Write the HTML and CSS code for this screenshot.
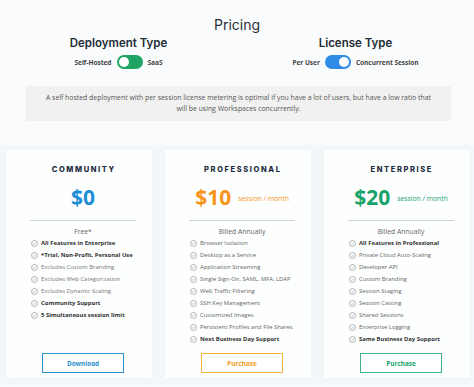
FILE: index.html
```html
<!DOCTYPE html>
<html lang="en">
<head>
    <meta charset="UTF-8">
    <title>Pricing</title>
    <link rel="stylesheet" href="styles.css">
</head>
<body>
    <div class="pricing-page">
        <h1 class="page-title">Pricing</h1>

        <div class="options">
            <div class="option">
                <h2 class="option-title">Deployment Type</h2>
                <div class="switch-row">
                    <span class="switch-label">Self-Hosted</span>
                    <span class="switch switch-green"><span class="knob"></span></span>
                    <span class="switch-label">SaaS</span>
                </div>
            </div>
            <div class="option">
                <h2 class="option-title">License Type</h2>
                <div class="switch-row">
                    <span class="switch-label">Per User</span>
                    <span class="switch switch-blue on"><span class="knob"></span></span>
                    <span class="switch-label">Concurrent Session</span>
                </div>
            </div>
        </div>

        <div class="info-box">
            A self hosted deployment with per session license metering is optimal if you have a lot of users, but have a low ratio that<br>
            will be using Workspaces concurrently.
        </div>

        <div class="plans">
            <div class="plan plan-community">
                <h3 class="plan-name">COMMUNITY</h3>
                <div class="plan-price"><span class="amount">$0</span></div>
                <div class="divider"></div>
                <p class="billing">Free*</p>
                <ul class="features">
                    <li class="strong">All Features in Enterprise</li>
                    <li class="strong">*Trial, Non-Profit, Personal Use</li>
                    <li class="muted">Excludes Custom Branding</li>
                    <li class="muted">Excludes Web Categorization</li>
                    <li class="muted">Excludes Dynamic Scaling</li>
                    <li class="strong">Community Support</li>
                    <li class="strong">5 Simultaneous session limit</li>
                </ul>
                <button class="plan-button">Download</button>
            </div>

            <div class="plan plan-pro">
                <h3 class="plan-name">PROFESSIONAL</h3>
                <div class="plan-price"><span class="amount">$10</span><span class="unit">session / month</span></div>
                <div class="divider"></div>
                <p class="billing">Billed Annually</p>
                <ul class="features">
                    <li>Browser Isolation</li>
                    <li>Desktop as a Service</li>
                    <li>Application Streaming</li>
                    <li>Single Sign-On, SAML, MFA, LDAP</li>
                    <li>Web Traffic Filtering</li>
                    <li>SSH Key Management</li>
                    <li>Customized Images</li>
                    <li>Persistent Profiles and File Shares</li>
                    <li class="strong">Next Business Day Support</li>
                </ul>
                <button class="plan-button">Purchase</button>
            </div>

            <div class="plan plan-enterprise">
                <h3 class="plan-name">ENTERPRISE</h3>
                <div class="plan-price"><span class="amount">$20</span><span class="unit">session / month</span></div>
                <div class="divider"></div>
                <p class="billing">Billed Annually</p>
                <ul class="features">
                    <li class="strong">All Features in Professional</li>
                    <li>Private Cloud Auto-Scaling</li>
                    <li>Developer API</li>
                    <li>Custom Branding</li>
                    <li>Session Staging</li>
                    <li>Session Casting</li>
                    <li>Shared Sessions</li>
                    <li>Enterprise Logging</li>
                    <li class="strong">Same Business Day Support</li>
                </ul>
                <button class="plan-button">Purchase</button>
            </div>
        </div>
    </div>
</body>
</html>
```

FILE: styles.css
```css
* {
    margin: 0;
    padding: 0;
    box-sizing: border-box;
}

body {
    font-family: 'Open Sans', sans-serif;
    background: #f9fbfc;
    color: #555;
    width: 474px;
    height: 387px;
    overflow: hidden;
}

.pricing-page {
    padding-top: 14px;
}

.page-title {
    font-family: 'Inter', sans-serif;
    font-size: 14px;
    font-weight: 400;
    line-height: 22px;
    text-align: center;
    color: #2b3038;
}

.options {
    display: grid;
    grid-template-columns: 1fr 1fr;
}

.option {
    display: flex;
    flex-direction: column;
    align-items: center;
}

.option-title {
    font-family: 'Inter', sans-serif;
    font-size: 11.5px;
    font-weight: 600;
    line-height: 14px;
    color: #222b36;
}

.switch-row {
    display: flex;
    align-items: center;
    gap: 5px;
    margin-top: 5px;
    height: 14px;
}

.switch-label {
    font-size: 6.5px;
    font-weight: 700;
    color: #444;
}

.switch {
    width: 26px;
    height: 14px;
    border-radius: 7px;
    padding: 2px;
    display: flex;
}

.switch-green {
    background: #1fa463;
}

.switch-blue {
    background: #2f8be6;
}

.switch.on {
    justify-content: flex-end;
}

.knob {
    width: 10px;
    height: 10px;
    border-radius: 50%;
    background: #fff;
}

.info-box {
    margin: 17px 23px 0 26px;
    padding: 6px 8px 7px;
    background: #f1f1f1;
    font-size: 6.9px;
    line-height: 11px;
    text-align: center;
    color: #555;
}

.plans {
    margin-top: 24px;
    padding: 5px 4px 0 6px;
    background: #f4f7f9;
    display: flex;
    gap: 13px;
    height: 240px;
}

.plan {
    width: 146px;
    height: 228px;
    background: #fdfefe;
    padding: 14px 16px 5px 24px;
    display: flex;
    flex-direction: column;
    align-items: center;
    box-shadow: 0 0 3px rgba(0, 0, 0, 0.03);
}

.plan-name {
    font-family: 'Inter', sans-serif;
    font-size: 7.5px;
    font-weight: 800;
    letter-spacing: 1.6px;
    line-height: 12px;
    color: #1d2b3f;
    margin-right: -1.6px;
}

.plan-price {
    display: flex;
    align-items: center;
    gap: 7px;
    margin-top: 9px;
    height: 24px;
}

.amount {
    font-size: 21px;
    font-weight: 700;
    line-height: 24px;
}

.unit {
    font-size: 6.8px;
    padding-top: 2px;
}

.plan-community .amount { color: #1e8fd4; }
.plan-pro .amount, .plan-pro .unit { color: #f7941d; }
.plan-enterprise .amount, .plan-enterprise .unit { color: #19a46b; }

.divider {
    width: 100%;
    height: 1px;
    background: #cfd3d6;
    margin-top: 11px;
}

.billing {
    margin-top: 5px;
    font-size: 6.8px;
    line-height: 11px;
    color: #666;
}

.features {
    list-style: none;
    align-self: stretch;
    padding-left: 1px;
}

.features li {
    display: flex;
    align-items: center;
    height: 12px;
    font-size: 5.9px;
    color: #666;
    white-space: nowrap;
}

.features li::before {
    content: "";
    width: 7px;
    height: 7px;
    margin-right: 3px;
    flex-shrink: 0;
    background: url("data:image/svg+xml;utf8,<svg xmlns='http://www.w3.org/2000/svg' viewBox='0 0 14 14'><circle cx='7' cy='7' r='6' fill='none' stroke='%23888' stroke-width='1.2'/><path d='M4.3 7.2l1.9 1.9 3.6-3.8' fill='none' stroke='%23888' stroke-width='1.2'/></svg>") no-repeat center / contain;
}

.features li.strong {
    font-weight: 700;
    color: #333;
}

.features li.muted {
    color: #777;
}

.plan-button {
    margin-top: auto;
    width: 82px;
    height: 20px;
    background: #fff;
    border: 1px solid;
    font-family: 'Open Sans', sans-serif;
    font-size: 6.4px;
    font-weight: 700;
}

.plan-community .plan-button { border-color: #2a8fd0; color: #2a8fd0; }
.plan-pro .plan-button { border-color: #f6b040; color: #f39c1e; }
.plan-enterprise .plan-button { border-color: #3db383; color: #19a46b; }
```
